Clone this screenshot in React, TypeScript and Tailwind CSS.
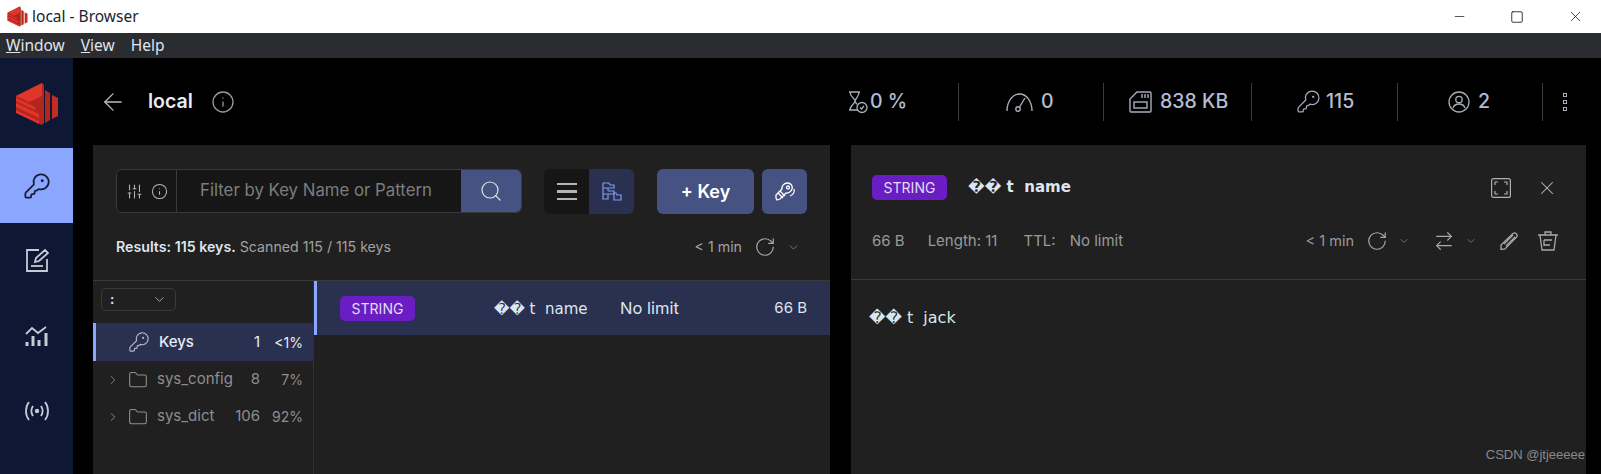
import { ArrowLeft, ChevronDown, ChevronRight, Folder, Info, KeyRound, RotateCw, Search, SlidersVertical, X, ArrowRightLeft, Minus, Square } from "lucide-react";

const font = { sans: "font-['Inter',sans-serif]" };

function RedisLogo({ size = 44 }: { size?: number }) {
  return (
    <svg width={size} height={size} viewBox="0 0 44 44" className="shrink-0">
      <path d="M1 14 L27 1 L29 3 V41 L27 43 L1 30 Z" fill="#b3261e" />
      <path d="M1 14 L27 1 L27 14 L14 20 L1 14 Z" fill="#e0352b" />
      <path d="M1 21 L24 32 L24 36 L1 25 Z" fill="#e0352b" />
      <path d="M1 28 L24 39 L24 42 L1 31 Z" fill="#e0352b" />
      <path d="M1 16 L20 25 L20 28 L1 19 Z" fill="#e0352b" />
      <path d="M30 8 L35 11 V38 L30 41 Z" fill="#b3261e" />
      <path d="M37 13 L43 16 V34 L37 37 Z" fill="#c22c22" />
    </svg>
  );
}

function Hourglass() {
  return (
    <svg width="24" height="24" viewBox="0 0 24 24" fill="none" stroke="currentColor" strokeWidth="1.3">
      <path d="M3 2h11M3 20h9M4 2c0 5 5 6 5 9s-5 4-5 9M13 2c0 4-3 6-4 9 .5 1.5 1.2 2.3 2 3.2" />
      <circle cx="16" cy="17.5" r="5" />
      <path d="M14 17.5l1.5 1.5 2.5-3" />
    </svg>
  );
}

function GaugeIcon() {
  return (
    <svg width="29" height="22" viewBox="0 0 29 22" fill="none" stroke="currentColor" strokeWidth="1.4">
      <path d="M2 20C2 11 7 3 14.5 3S27 11 27 20" />
      <circle cx="13" cy="18" r="2.2" />
      <path d="M14.5 16L20 7" />
    </svg>
  );
}

function SdCard() {
  return (
    <svg width="23" height="22" viewBox="0 0 23 22" fill="none" stroke="currentColor" strokeWidth="1.4">
      <path d="M8 1h13a1 1 0 0 1 1 1v18a1 1 0 0 1-1 1H2a1 1 0 0 1-1-1V8z" />
      <path d="M13 3v4M16 3v4M19 3v4" />
      <rect x="5" y="11" width="13" height="6" />
    </svg>
  );
}

function UserCircle() {
  return (
    <svg width="22" height="22" viewBox="0 0 22 22" fill="none" stroke="currentColor" strokeWidth="1.3">
      <circle cx="11" cy="11" r="10" />
      <circle cx="11" cy="8.5" r="3.2" />
      <path d="M5 17c1-3 3.5-4 6-4s5 1 6 4" />
    </svg>
  );
}

function TreeIcon() {
  return (
    <svg width="20" height="20" viewBox="0 0 20 20" fill="none" stroke="#7f9bf0" strokeWidth="1.2">
      <path d="M1 1h6l1 2h4v3H6v3M1 1v16h5v-5h6V9H6M1 6h5M1 12h5" />
      <path d="M12 11h2l1 2h4v5h-7z" />
    </svg>
  );
}

function KeysIcon() {
  return (
    <svg width="22" height="22" viewBox="0 0 22 22" fill="none" stroke="#fff" strokeWidth="1.3">
      <path d="M2 14l6-6c-.5-3 2-6 5.5-6S19 5 18 8s-4 4.5-6 4l-6 6-3 1-1-2z" />
      <circle cx="14" cy="6.5" r="1.5" />
      <path d="M4 12l5 5M6 10l5 5M20 8c1 3-1 6-4 7" />
    </svg>
  );
}

function EditorIcon() {
  return (
    <svg width="24" height="25" viewBox="0 0 24 25" fill="none" stroke="#c5cad6" strokeWidth="1.8">
      <path d="M14 2H2v21h20V11" />
      <path d="M10 14l1-4 9-8 3 3-9 8z" />
      <path d="M6 18h12" />
    </svg>
  );
}

function AnalysisIcon() {
  return (
    <svg width="24" height="22" viewBox="0 0 24 22" fill="none" stroke="#c5cad6" strokeWidth="1.8">
      <path d="M1 9l6-6 6 5 8-6" />
      <path d="M2 17v4M8 11v10M14 15v6M21 8v13" strokeWidth="3" />
    </svg>
  );
}

function PubSubIcon() {
  return (
    <svg width="26" height="20" viewBox="0 0 26 20" fill="none" stroke="#c5cad6" strokeWidth="1.8">
      <path d="M5 1C1 6 1 14 5 19M21 1c4 5 4 13 0 18M9 5c-2 3-2 7 0 10M17 5c2 3 2 7 0 10" />
      <circle cx="13" cy="10" r="1.3" fill="#c5cad6" />
    </svg>
  );
}

function TrashIcon() {
  return (
    <svg width="20" height="20" viewBox="0 0 20 20" fill="none" stroke="currentColor" strokeWidth="1.3">
      <path d="M0 4h20M7 4V1h6v3M2 4l2 15h12l2-15M6 9h8M6 14h6M6 9v6" />
    </svg>
  );
}

function ExpandIcon() {
  return (
    <svg width="20" height="20" viewBox="0 0 20 20" fill="none" stroke="currentColor" strokeWidth="1.2">
      <rect x="0.6" y="0.6" width="18.8" height="18.8" rx="2" />
      <path d="M4 7V4h3M13 4h3v3M16 13v3h-3M7 16H4v-3" />
    </svg>
  );
}

function FatPencil() {
  return (
    <svg width="18" height="18" viewBox="0 0 18 18" fill="none" stroke="currentColor" strokeWidth="1.3">
      <path d="M1 13L13 1.500a2.500 2.500 0 0 1 3.500 3.500L5 17l-4 .5z" />
      <path d="M4 12l9-9M6 14l9-9" />
    </svg>
  );
}

function Badge() {
  return (
    <span className="flex h-[25px] w-[75px] shrink-0 items-center justify-center rounded-[5px] bg-[#6a1dc3] text-[14px] text-[#e3dcf5]">
      STRING
    </span>
  );
}

function Stat({ width, icon, value, gap = 8 }: { width: string; icon: React.ReactNode; value: string; gap?: number }) {
  return (
    <div className={`flex h-[38px] items-center border-r border-[#3a3a3a] ${width}`}>
      <span className="flex items-center text-[#a8adb8]">{icon}</span>
      <span className="text-[19.5px] font-medium text-[#b4bcd0]" style={{ marginLeft: gap }}>{value}</span>
    </div>
  );
}

function TreeRow({ name, count, pct }: { name: string; count: string; pct: string }) {
  return (
    <div className="flex h-[37px] items-center text-[15px] text-[#8e8e8e]">
      <ChevronRight size={14} strokeWidth={1.5} className="ml-[13px] shrink-0" />
      <Folder size={20} strokeWidth={1.3} className="ml-[8px] shrink-0" />
      <span className="ml-[9px] flex-1">{name}</span>
      <span className="text-right">{count}</span>
      <span className="ml-[8px] w-[45px] pr-[10px] text-right text-[14px]">{pct}</span>
    </div>
  );
}

function KeyName({ bold }: { bold?: boolean }) {
  return (
    <span className={`whitespace-pre font-['DejaVu_Sans',sans-serif] text-[15px] ${bold ? "font-bold text-[#dfe5ef]" : "text-[#dfe5ef]"}`}>
      {"\uFFFD\uFFFD t  name"}
    </span>
  );
}

export default function App() {
  return (
    <div className={`relative flex h-[474px] w-[1601px] flex-col overflow-hidden bg-black ${font.sans}`}>
      {/* window chrome */}
      <div className="flex h-[33px] shrink-0 items-center bg-white pl-[7px] font-['Noto_Sans',sans-serif] text-[15.5px] text-[#1a2433]">
        <RedisLogo size={21} />
        <span className="ml-[4px]">local - Browser</span>
        <div className="ml-auto flex items-center gap-[43px] pr-[17px] text-[#222]">
          <Minus size={15} strokeWidth={1.2} />
          <Square size={14} strokeWidth={1.5} />
          <X size={17} strokeWidth={1.1} />
        </div>
      </div>
      <div className="flex h-[25px] shrink-0 items-center gap-[16px] bg-[#2b2c30] pl-[6px] font-['Noto_Sans',sans-serif] text-[15.5px] text-[#dfe5ef]">
        <span><span className="underline">W</span>indow</span>
        <span><span className="underline">V</span>iew</span>
        <span>Help</span>
      </div>

      <div className="flex min-h-0 flex-1">
        {/* nav */}
        <nav className="flex w-[73px] shrink-0 flex-col bg-[#0e1734]">
          <div className="flex h-[90px] items-center justify-center pt-[2px]">
            <RedisLogo size={44} />
          </div>
          <div className="flex h-[75px] items-center justify-center bg-[#8ba6ff] text-[#161c33]">
            <KeyRound size={28} strokeWidth={1.5} />
          </div>
          <div className="flex h-[75px] items-center justify-center"><EditorIcon /></div>
          <div className="flex h-[75px] items-center justify-center"><AnalysisIcon /></div>
          <div className="flex h-[75px] items-center justify-center"><PubSubIcon /></div>
        </nav>

        <div className="flex min-w-0 flex-1 flex-col">
          {/* header */}
          <header className="flex h-[87px] shrink-0 items-center">
            <ArrowLeft size={28} strokeWidth={1.1} className="ml-[26px] text-[#b9bcc4]" />
            <span className="ml-[21px] text-[19.5px] font-semibold text-[#e6ecf7]">local</span>
            <Info size={24} strokeWidth={1.3} className="ml-[18px] text-[#9a9a9a]" />
            <div className="ml-auto flex items-center">
              <Stat width="w-[113px]" icon={<Hourglass />} value="0 %" gap={0} />
              <Stat width="w-[145px] pl-[46px]" icon={<GaugeIcon />} value="0" gap={7} />
              <Stat width="w-[148px] pl-[25px]" icon={<SdCard />} value="838 KB" />
              <Stat width="w-[146px] pl-[44px]" icon={<KeyRound size={25} strokeWidth={1.2} />} value="115" gap={5} />
              <Stat width="w-[145px] pl-[50px]" icon={<UserCircle />} value="2" />
              <div className="ml-[19px] mr-[33px] flex h-[38px] w-[6px] flex-col items-center justify-center gap-[3px]">
                <span className="size-[4px] border border-[#a8adb8]" />
                <span className="size-[4px] border border-[#a8adb8]" />
                <span className="size-[4px] border border-[#a8adb8]" />
              </div>
            </div>
          </header>

          {/* panels */}
          <div className="flex min-h-0 flex-1 gap-[21px] pl-[20px] pr-[15px]">
            <section className="flex w-[737px] shrink-0 flex-col bg-[#202020]">
              <div className="flex items-start pl-[23px] pt-[24px]">
                <div className="flex h-[44px] w-[406px] overflow-hidden rounded-[6px] border border-[#3a3a3a] bg-[#161616]">
                  <div className="flex w-[60px] items-center gap-[8px] border-r border-[#3a3a3a] pl-[9px] text-[#b5b5b5]">
                    <SlidersVertical size={17} strokeWidth={1.5} />
                    <Info size={17} strokeWidth={1.5} />
                  </div>
                  <span className="flex flex-1 items-center pl-[23px] text-[16.8px] text-[#7d7d7d]">Filter by Key Name or Pattern</span>
                  <div className="flex w-[60px] items-center justify-center bg-[#465282] text-[#e3e3e3]">
                    <Search size={24} strokeWidth={1.2} />
                  </div>
                </div>
                <div className="ml-[22px] flex h-[45px] w-[45px] flex-col items-center justify-center gap-[5px] rounded-l-[6px] bg-[#161616]">
                  <span className="h-[2.5px] w-[20px] bg-[#b5b5b5]" />
                  <span className="h-[2.5px] w-[20px] bg-[#b5b5b5]" />
                  <span className="h-[2.5px] w-[20px] bg-[#b5b5b5]" />
                </div>
                <div className="flex h-[45px] w-[45px] items-center justify-center rounded-r-[6px] bg-[#2a3150]">
                  <TreeIcon />
                </div>
                <div className="ml-[23px] flex h-[45px] w-[97px] items-center justify-center rounded-[6px] bg-[#465282] text-[18px] font-semibold text-white">
                  + Key
                </div>
                <div className="ml-[8px] flex h-[45px] w-[45px] items-center justify-center rounded-[6px] bg-[#465282]">
                  <KeysIcon />
                </div>
              </div>
              <div className="flex h-[66px] items-center pl-[23px] pr-[30px] text-[14.2px]">
                <span className="font-semibold text-[#dfe5ef]">Results: 115 keys.</span>
                <span className="ml-[4px] text-[#a0a0a0]">Scanned 115 / 115 keys</span>
                <span className="ml-auto text-[#9ea3ae]">&lt; 1 min</span>
                <RotateCw size={22} strokeWidth={1.3} className="ml-[12px] text-[#a8a8a8]" />
                <ChevronDown size={13} strokeWidth={1.3} className="ml-[11px] text-[#9a9a9a]" />
              </div>
              <div className="flex min-h-0 flex-1 border-t border-[#3a3a3a]">
                <div className="w-[221px] shrink-0 border-r border-[#303030]">
                  <div className="pb-[12px] pl-[8px] pt-[7px]">
                    <div className="flex h-[23px] w-[75px] items-center justify-between rounded-[5px] border border-[#3a3a3a] pl-[8px] pr-[8px] text-[13px] font-bold text-[#dfe5ef]">
                      :
                      <ChevronDown size={15} strokeWidth={1.3} className="text-[#c0c0c0]" />
                    </div>
                  </div>
                  <div className="flex h-[38px] items-center border-l-[3px] border-[#8ba6ff] bg-[#2a3150] text-[15px] text-[#e6ecf7]">
                    <KeyRound size={22} strokeWidth={1.2} className="ml-[32px] text-[#b9bcc8]" />
                    <span className="ml-[9px] flex-1 font-medium">Keys</span>
                    <span>1</span>
                    <span className="ml-[8px] w-[45px] pr-[10px] text-right text-[14px]">&lt;1%</span>
                  </div>
                  <TreeRow name="sys_config" count="8" pct="7%" />
                  <TreeRow name="sys_dict" count="106" pct="92%" />
                </div>
                <div className="min-w-0 flex-1">
                  <div className="flex h-[54px] items-center border-l-[3px] border-[#8ba6ff] bg-[#2a3150] pl-[23px] pr-[23px]">
                    <Badge />
                    <span className="ml-[79px] w-[126px] shrink-0"><KeyName /></span>
                    <span className="text-[16.5px] text-[#dfe5ef]">No limit</span>
                    <span className="ml-auto text-[15px] text-[#dfe5ef]">66 B</span>
                  </div>
                </div>
              </div>
            </section>

            <section className="flex min-w-0 flex-1 flex-col bg-[#202020]">
              <div className="flex h-[135px] shrink-0 flex-col border-b border-[#3a3a3a] pl-[21px] pr-[28px]">
                <div className="mt-[30px] flex h-[25px] items-center">
                  <Badge />
                  <span className="ml-[21px] -translate-y-[1px]"><KeyName bold /></span>
                  <span className="ml-auto text-[#b0b0b0]"><ExpandIcon /></span>
                  <X size={22} strokeWidth={1.1} className="ml-[25px] text-[#b8b8b8]" />
                </div>
                <div className="mt-[29px] flex h-[24px] items-center text-[15px] text-[#9a9a9a]">
                  <span>66 B</span>
                  <span className="ml-[23px]">Length: 11</span>
                  <span className="ml-[26px]">TTL:</span>
                  <span className="ml-[14px]">No limit</span>
                  <span className="ml-auto text-[14.5px]">&lt; 1 min</span>
                  <RotateCw size={22} strokeWidth={1.3} className="ml-[12px] text-[#a8a8a8]" />
                  <ChevronDown size={12} strokeWidth={1.3} className="ml-[10px]" />
                  <ArrowRightLeft size={22} strokeWidth={1.3} className="ml-[23px] text-[#a8a8a8]" />
                  <ChevronDown size={12} strokeWidth={1.3} className="ml-[10px]" />
                  <span className="ml-[23px] text-[#a8a8a8]"><FatPencil /></span>
                  <span className="ml-[20px] text-[#a8a8a8]"><TrashIcon /></span>
                </div>
              </div>
              <div className="whitespace-pre pl-[18px] pt-[26px] font-['DejaVu_Sans',sans-serif] text-[16px] text-[#d8e6ee]">
                {"\uFFFD\uFFFD t  jack"}
              </div>
            </section>
          </div>
        </div>
      </div>

      <span className="absolute bottom-[10px] right-[16px] font-['Liberation_Sans',sans-serif] text-[13px] text-[#8a8a8a]">CSDN @jtjeeeee</span>
    </div>
  );
}
